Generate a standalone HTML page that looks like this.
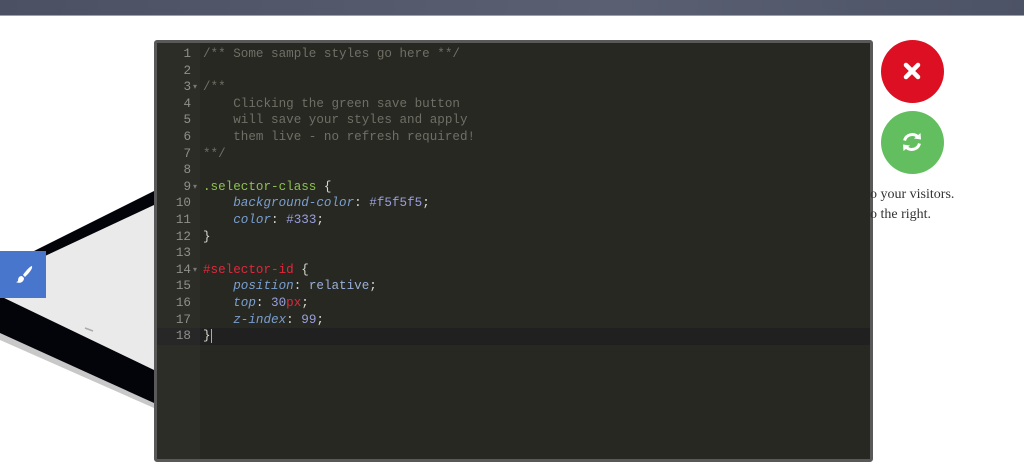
<!DOCTYPE html>
<html><head><meta charset="utf-8"><style>
body{margin:0;width:1024px;height:472px;background:#fff;position:relative;overflow:hidden;font-family:"Liberation Sans",sans-serif}
.top{position:absolute;left:0;top:0;width:1024px;height:15px;background:linear-gradient(90deg,#4b5163,#5a6072 60%,#4d5366);border-bottom:1px solid #9aa0ad}
.ed{position:absolute;left:154px;top:40px;width:713px;height:416px;border:3px solid #59595a;border-radius:3px;background:#272822;overflow:hidden}
.gut{position:absolute;left:0;top:0;width:43px;height:100%;background:#2c2d27}
.act{position:absolute;left:0;top:285px;width:100%;height:17px;background:#202020}
.actg{position:absolute;left:0;top:285px;width:43px;height:17px;background:#272727}
pre{margin:0;position:absolute;top:3px;font-family:"Liberation Mono",monospace;font-size:12.6px;line-height:16.6px}
.ln{left:0;width:34px;text-align:right;color:#8f908a}
.code{left:46px;color:#d8d8d0}
.c{color:#6f6f66}.s{color:#8cc152}.p{color:#7a9fcf;font-style:italic}.n{color:#9a9fdd}.r{color:#e0283c}.k{color:#9ab0d8}
.f{color:#777;font-size:8px;position:absolute;left:36px;line-height:16.6px}
.btn{position:absolute;left:881px;width:63px;height:63px;border-radius:50%}
.txt{position:absolute;left:870px;font-family:"Liberation Serif",serif;font-size:14px;color:#333}
</style></head><body>
<div class="top"></div>
<svg style="position:absolute;left:0;top:0" width="160" height="472">
<polygon points="154,408 0,340 0,330 154,403" fill="#c8c8c8"/>
<polygon points="154,191 32,252 0,268 0,333 154,403" fill="#03040a"/>
<polygon points="154,205 45,256 0,278 0,296 154,370" fill="#eaeaea"/>
<line x1="85" y1="328" x2="93" y2="331" stroke="#aaa" stroke-width="1.5"/>
</svg>
<div style="position:absolute;left:0;top:251px;width:46px;height:47px;background:#4976cd"></div>
<svg style="position:absolute;left:13px;top:263px" width="22" height="22" viewBox="0 0 22 22"><path d="M19 3 C17 3 12 9 10 12 L12 14 C15 11 20 6 19 3Z M9 13 C6 13 5 15 5 18 C4 19 3 19 3 19 C7 21 11 19 11 15Z" fill="#fff"/></svg>
<div class="ed">
<div class="gut"></div><div class="act"></div><div class="actg"></div>
<span class="f" style="top:36px">▾</span><span class="f" style="top:136px">▾</span><span class="f" style="top:219px">▾</span>
<pre class="ln">1
2
3
4
5
6
7
8
9
10
11
12
13
14
15
16
17
18</pre>
<pre class="code"><span class="c">/** Some sample styles go here **/</span>

<span class="c">/**
    Clicking the green save button
    will save your styles and apply
    them live - no refresh required!
**/</span>

<span class="s">.selector-class</span> {
    <span class="p">background-color</span>: <span class="n">#f5f5f5</span>;
    <span class="p">color</span>: <span class="n">#333</span>;
}

<span class="r">#selector-id</span> {
    <span class="p">position</span>: <span class="k">relative</span>;
    <span class="p">top</span>: <span class="n">30</span><span class="r">px</span>;
    <span class="p">z-index</span>: <span class="n">99</span>;
}<span style="border-left:1px solid #aaa"></span></pre>
</div>
<div class="btn" style="top:40px;background:#dc1022"></div>
<svg style="position:absolute;left:902px;top:61px" width="20" height="20"><path d="M4 4L16 16M16 4L4 16" stroke="#fff" stroke-width="4.5" stroke-linecap="round"/></svg>
<div class="btn" style="top:111px;background:#63be5f"></div>
<svg style="position:absolute;left:900px;top:130px" width="24" height="24" viewBox="0 0 24 24"><path d="M4.5 10.5A8 8 0 0 1 18 7" fill="none" stroke="#fff" stroke-width="3"/><path d="M14 8.5L21 9.5L20.5 3Z" fill="#fff"/><path d="M19.5 13.5A8 8 0 0 1 6 17" fill="none" stroke="#fff" stroke-width="3"/><path d="M10 15.5L3 14.5L3.5 21Z" fill="#fff"/></svg>
<div class="txt" style="top:187px">o your visitors.</div>
<div class="txt" style="top:207px">o the right.</div>
</body></html>
